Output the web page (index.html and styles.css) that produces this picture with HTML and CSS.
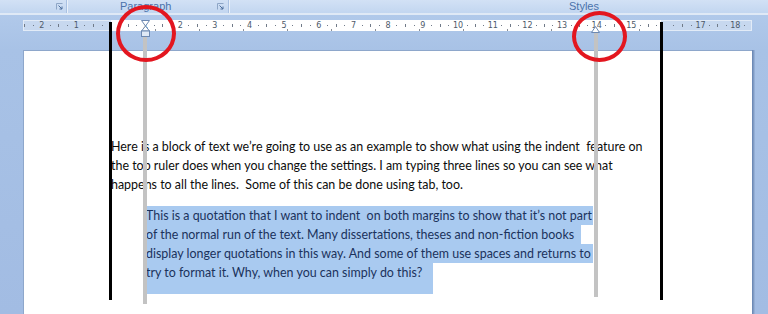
FILE: index.html
```html
<!DOCTYPE html>
<html>
<head>
<meta charset="utf-8">
<link rel="stylesheet" href="styles.css">
</head>
<body>
<div class="app">
  <div class="ribbon">
    <div class="group g-font">
      <span class="launcher"><svg width="7" height="7" viewBox="0 0 7 7"><path d="M0.5 6.5V0.5H6.5" fill="none" stroke="#8ea6c6"/><path d="M2.5 2.5L6 6M6 3.5V6H3.5" fill="none" stroke="#4d6e9c"/></svg></span>
    </div>
    <div class="group g-para">
      <span class="label">Paragraph</span>
      <span class="launcher"><svg width="7" height="7" viewBox="0 0 7 7"><path d="M0.5 6.5V0.5H6.5" fill="none" stroke="#8ea6c6"/><path d="M2.5 2.5L6 6M6 3.5V6H3.5" fill="none" stroke="#4d6e9c"/></svg></span>
    </div>
    <div class="group g-styles">
      <span class="label">Styles</span>
    </div>
  </div>

  <div class="ruler">
    <div class="r-margin r-left"></div>
    <div class="r-text"></div>
    <div class="r-margin r-right"></div>
    <div class="scale">
      <div class="cm"><i class="n"></i><i class="d"></i><i class="t"></i><i class="d"></i></div>
      <div class="cm"><i class="n">2</i><i class="d"></i><i class="t"></i><i class="d"></i></div>
      <div class="cm"><i class="n">1</i><i class="d"></i><i class="t"></i><i class="d"></i></div>
      <div class="cm"><i class="n"></i><i class="d"></i><i class="t"></i><i class="d"></i></div>
      <div class="cm"><i class="n">1</i><i class="d"></i><i class="t"></i><i class="d"></i></div>
      <div class="cm"><i class="n">2</i><i class="d"></i><i class="t"></i><i class="d"></i></div>
      <div class="cm"><i class="n">3</i><i class="d"></i><i class="t"></i><i class="d"></i></div>
      <div class="cm"><i class="n">4</i><i class="d"></i><i class="t"></i><i class="d"></i></div>
      <div class="cm"><i class="n">5</i><i class="d"></i><i class="t"></i><i class="d"></i></div>
      <div class="cm"><i class="n">6</i><i class="d"></i><i class="t"></i><i class="d"></i></div>
      <div class="cm"><i class="n">7</i><i class="d"></i><i class="t"></i><i class="d"></i></div>
      <div class="cm"><i class="n">8</i><i class="d"></i><i class="t"></i><i class="d"></i></div>
      <div class="cm"><i class="n">9</i><i class="d"></i><i class="t"></i><i class="d"></i></div>
      <div class="cm"><i class="n">10</i><i class="d"></i><i class="t"></i><i class="d"></i></div>
      <div class="cm"><i class="n">11</i><i class="d"></i><i class="t"></i><i class="d"></i></div>
      <div class="cm"><i class="n">12</i><i class="d"></i><i class="t"></i><i class="d"></i></div>
      <div class="cm"><i class="n">13</i><i class="d"></i><i class="t"></i><i class="d"></i></div>
      <div class="cm"><i class="n">14</i><i class="d"></i><i class="t"></i><i class="d"></i></div>
      <div class="cm"><i class="n">15</i><i class="d"></i><i class="t"></i><i class="d"></i></div>
      <div class="cm"><i class="n"></i><i class="d"></i><i class="t"></i><i class="d"></i></div>
      <div class="cm"><i class="n">17</i><i class="d"></i><i class="t"></i><i class="d"></i></div>
      <div class="cm"><i class="n">18</i><i class="d"></i><i class="t"></i><i class="d"></i></div>
    </div>
    <div class="tabs"><i></i><i></i><i></i><i></i><i></i><i></i><i></i><i></i><i></i><i></i><i></i><i></i></div>
  </div>

  <div class="page">
    <p class="body">
      <span class="line">Here is a block of text we’re going to use as an example to show what using the indent&nbsp; feature on</span>
      <span class="line">the top ruler does when you change the settings. I am typing three lines so you can see what</span>
      <span class="line">happens to all the lines.&nbsp; Some of this can be done using tab, too.</span>
    </p>
    <div class="quote">
      <span class="ql ql1">This is a quotation that I want to indent&nbsp; on both margins to show that it’s not part</span>
      <span class="ql ql2">of the normal run of the text. Many dissertations, theses and non-fiction books</span>
      <span class="ql ql3">display longer quotations in this way. And some of them use spaces and returns to</span>
      <span class="ql ql4">try to format it. Why, when you can simply do this?</span>
    </div>
  </div>

  <div class="vline black bl-left"></div>
  <div class="vline black bl-right"></div>
  <div class="vline gray gl-left"></div>
  <div class="vline gray gl-right"></div>

  <svg class="marker mk-left" width="9" height="17" viewBox="0 0 9 17">
    <polygon points="0.5,0.5 8.5,0.5 4.5,6" fill="#fff" stroke="#6d89b2"/>
    <polygon points="4.5,6 8.5,11 0.5,11" fill="#fff" stroke="#6d89b2"/>
    <rect x="0.5" y="11" width="8" height="5.5" fill="#dfe9f6" stroke="#6d89b2"/>
  </svg>
  <svg class="marker mk-right" width="9" height="7" viewBox="0 0 9 7">
    <polygon points="4.5,0.5 8.5,6.5 0.5,6.5" fill="#fff" stroke="#6d89b2"/>
  </svg>

  <div class="circle c-left"></div>
  <div class="circle c-right"></div>
</div>
</body>
</html>
```

FILE: styles.css
```css
* { box-sizing: border-box; }
body { margin: 0; background: #a4bee4; font-family: "Lato", "Liberation Sans", sans-serif; }

.app {
  position: relative;
  width: 768px;
  height: 314px;
  overflow: hidden;
  background: linear-gradient(#b4ccec 0px, #a8c2e6 50px, #a2bce3 314px);
}

/* ribbon group label strip */
.ribbon {
  display: flex;
  height: 15px;
  background: linear-gradient(#d2e1f5, #c2d6f0);
  border-bottom: 2px solid #dfe9f6;
}
.group {
  display: flex;
  align-items: center;
  height: 13px;
}
.g-font {
  width: 67px;
  border-right: 1px solid #a9c1e2;
}
.g-para {
  width: 162px;
  border-left: 1px solid #eaf1fa;
  border-right: 1px solid #a9c1e2;
}
.g-styles {
  flex: 1;
  border-left: 1px solid #eaf1fa;
}
.launcher {
  display: flex;
  margin-left: auto;
  margin-right: 3px;
}
.g-para .launcher { margin-right: 4px; margin-left: 0; }
.label {
  font-family: "Liberation Sans", sans-serif;
  font-size: 11px;
  line-height: 13px;
  color: #4a72ab;
}
.g-para .label { flex: 1; padding-left: 52px; }
.g-styles .label { padding-left: 339px; }

/* ruler */
.ruler {
  position: relative;
  display: flex;
  width: 729px;
  height: 11px;
  margin: 5px 0 0 23px;
  overflow: hidden;
}
.r-margin {
  background: #c7d8ef;
  border: 1px solid #e2ebf7;
}
.r-left { width: 88px; border-right: 0; }
.r-text { width: 550px; background: #fff; }
.r-right { flex: 1; border-left: 0; }

.scale {
  position: absolute;
  top: 0;
  bottom: 0;
  left: -20.3px;
  display: flex;
}
.cm { display: flex; flex: 0 0 34.65px; }
.cm > i {
  flex: 1;
  display: flex;
  justify-content: center;
  align-items: center;
  font-style: normal;
}
.n {
  font-family: "DejaVu Sans", sans-serif;
  font-size: 8px;
  color: #4e5a6a;
  line-height: 11px;
}
.d::before { content: ""; width: 1px; height: 1px; background: #707a88; }
.t::before { content: ""; width: 1px; height: 3px; background: #707a88; }

.tabs {
  position: absolute;
  left: 132px;
  top: 9px;
  display: flex;
  gap: 43px;
}
.tabs i { width: 1px; height: 2px; background: #8a8f98; }

/* page */
.page {
  width: 729px;
  height: 300px;
  margin: 19px 0 0 23px;
  padding: 86px 0 0 87px;
  background: #fff;
  border-top: 1px solid #8ea7cb;
  border-left: 1px solid #8ea7cb;
  box-shadow: 1px 0 0 #6d8ab6, 2px 0 0 #7f9bc4, 3px 0 0 #94aed5;
}
.body {
  margin: 0;
  font-size: 12.45px;
  line-height: 19px;
  color: #0c0c0c;
  white-space: nowrap;
}
.line { display: block; }

.quote {
  margin: 12px 0 0 34px;
  font-size: 12.45px;
  color: #1b325c;
  white-space: nowrap;
}
.ql {
  display: block;
  height: 19px;
  line-height: 19px;
  padding-left: 1px;
  background: #a9caf0;
}
.ql1 { width: 448px; }
.ql2 { width: 436px; }
.ql3 { width: 448px; }
.ql4 { width: 288px; height: 31px; }

/* overlays */
.vline { position: absolute; }
.black { background: #000; width: 3px; top: 22px; height: 278px; }
.bl-left { left: 109px; }
.bl-right { left: 660px; }
.gray { background: #c3c3c3; width: 4px; }
.gl-left { left: 143px; top: 36px; height: 268px; }
.gl-right { left: 594px; top: 32px; height: 265px; }

.marker { position: absolute; }
.mk-left { left: 141px; top: 20px; }
.mk-right { left: 591px; top: 26px; }

.circle {
  position: absolute;
  border: 4px solid #e3161f;
  border-radius: 50%;
}
.c-left { left: 116px; top: 5px; width: 60px; height: 57px; }
.c-right { left: 572px; top: 11px; width: 55px; height: 51px; }
```
